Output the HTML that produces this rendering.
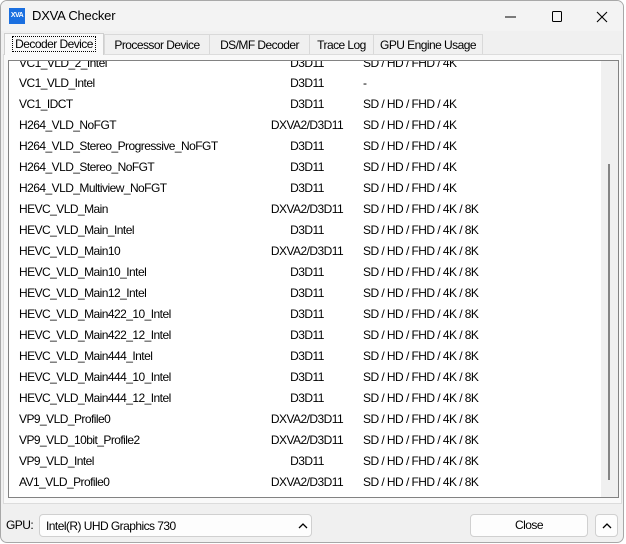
<!DOCTYPE html>
<html><head><meta charset="utf-8"><style>
*{margin:0;padding:0;box-sizing:border-box}
body{width:626px;height:544px;background:#fff;font-family:"Liberation Sans",sans-serif;font-size:12px;color:#000;position:relative;overflow:hidden;letter-spacing:-0.55px}
.win{position:absolute;left:0;top:0;width:624px;height:543px;background:#f0f0f0;border:1px solid #a8a8a8;border-radius:7px;overflow:hidden}
.title{position:absolute;left:0;top:0;width:100%;height:30px;background:#f3f3f3}
.abs{position:absolute}
.tab{position:absolute;top:33px;height:20px;border:1px solid #d9d9d9;border-bottom:none;background:#f0f0f0;padding:3px 0 0;text-align:center;white-space:nowrap;font-size:12px}
.panel{position:absolute;left:2px;top:53px;width:619px;height:450px;background:#f9f9f9;border:1px solid #dcdcdc}
.list{position:absolute;left:7px;top:59px;width:611px;height:438px;background:#fff;border:1px solid #828282;overflow:hidden}
.row{position:absolute;left:0;height:21px;width:592px;line-height:21px;white-space:nowrap}
.c1{position:absolute;left:10px}
.c2{position:absolute;left:240px;width:116px;text-align:center}
.c3{position:absolute;left:354px}
.btn{position:absolute;background:#fdfdfd;border:1px solid #d0d0d0;border-radius:4px}
</style></head><body>
<div class="win">
<div class="title"></div>
<div class="abs" style="left:8px;top:7px;width:16px;height:16px;background:#1a6fe0;color:#fff;font-size:7px;font-weight:bold;line-height:16px;text-align:center;letter-spacing:-0.5px">XVA</div>
<div class="abs" style="left:31px;top:7px;font-size:13px;letter-spacing:-0.2px">DXVA Checker</div>
<svg class="abs" style="left:500px;top:8px" width="120" height="16">
<line x1="4" y1="8" x2="15" y2="8" stroke="#000" stroke-width="1"/>
<rect x="51.5" y="2.5" width="9" height="10" rx="1" fill="none" stroke="#000"/>
<path d="M96 3L106 13M106 3L96 13" stroke="#000" stroke-width="1.1"/>
</svg>
<div class="panel"></div>
<div class="tab" style="left:103px;width:106px">Processor Device</div>
<div class="tab" style="left:208px;width:101px">DS/MF Decoder</div>
<div class="tab" style="left:308px;width:65px">Trace Log</div>
<div class="tab" style="left:372px;width:110px">GPU Engine Usage</div>
<div class="tab" style="left:3px;top:32px;width:100px;height:22px;background:#f9f9f9;border-color:#cfcfcf;z-index:2"><span style="border:1px dotted #000;padding:0 2px">Decoder Device</span></div>
<div class="list">
<div class="row" style="top:-8px"><span class="c1">VC1_VLD_2_Intel</span><span class="c2">D3D11</span><span class="c3">SD / HD / FHD / 4K</span></div>
<div class="row" style="top:12px"><span class="c1">VC1_VLD_Intel</span><span class="c2">D3D11</span><span class="c3">-</span></div>
<div class="row" style="top:33px"><span class="c1">VC1_IDCT</span><span class="c2">D3D11</span><span class="c3">SD / HD / FHD / 4K</span></div>
<div class="row" style="top:54px"><span class="c1">H264_VLD_NoFGT</span><span class="c2">DXVA2/D3D11</span><span class="c3">SD / HD / FHD / 4K</span></div>
<div class="row" style="top:75px"><span class="c1">H264_VLD_Stereo_Progressive_NoFGT</span><span class="c2">D3D11</span><span class="c3">SD / HD / FHD / 4K</span></div>
<div class="row" style="top:96px"><span class="c1">H264_VLD_Stereo_NoFGT</span><span class="c2">D3D11</span><span class="c3">SD / HD / FHD / 4K</span></div>
<div class="row" style="top:117px"><span class="c1">H264_VLD_Multiview_NoFGT</span><span class="c2">D3D11</span><span class="c3">SD / HD / FHD / 4K</span></div>
<div class="row" style="top:138px"><span class="c1">HEVC_VLD_Main</span><span class="c2">DXVA2/D3D11</span><span class="c3">SD / HD / FHD / 4K / 8K</span></div>
<div class="row" style="top:159px"><span class="c1">HEVC_VLD_Main_Intel</span><span class="c2">D3D11</span><span class="c3">SD / HD / FHD / 4K / 8K</span></div>
<div class="row" style="top:180px"><span class="c1">HEVC_VLD_Main10</span><span class="c2">DXVA2/D3D11</span><span class="c3">SD / HD / FHD / 4K / 8K</span></div>
<div class="row" style="top:201px"><span class="c1">HEVC_VLD_Main10_Intel</span><span class="c2">D3D11</span><span class="c3">SD / HD / FHD / 4K / 8K</span></div>
<div class="row" style="top:222px"><span class="c1">HEVC_VLD_Main12_Intel</span><span class="c2">D3D11</span><span class="c3">SD / HD / FHD / 4K / 8K</span></div>
<div class="row" style="top:243px"><span class="c1">HEVC_VLD_Main422_10_Intel</span><span class="c2">D3D11</span><span class="c3">SD / HD / FHD / 4K / 8K</span></div>
<div class="row" style="top:264px"><span class="c1">HEVC_VLD_Main422_12_Intel</span><span class="c2">D3D11</span><span class="c3">SD / HD / FHD / 4K / 8K</span></div>
<div class="row" style="top:285px"><span class="c1">HEVC_VLD_Main444_Intel</span><span class="c2">D3D11</span><span class="c3">SD / HD / FHD / 4K / 8K</span></div>
<div class="row" style="top:306px"><span class="c1">HEVC_VLD_Main444_10_Intel</span><span class="c2">D3D11</span><span class="c3">SD / HD / FHD / 4K / 8K</span></div>
<div class="row" style="top:327px"><span class="c1">HEVC_VLD_Main444_12_Intel</span><span class="c2">D3D11</span><span class="c3">SD / HD / FHD / 4K / 8K</span></div>
<div class="row" style="top:348px"><span class="c1">VP9_VLD_Profile0</span><span class="c2">DXVA2/D3D11</span><span class="c3">SD / HD / FHD / 4K / 8K</span></div>
<div class="row" style="top:369px"><span class="c1">VP9_VLD_10bit_Profile2</span><span class="c2">DXVA2/D3D11</span><span class="c3">SD / HD / FHD / 4K / 8K</span></div>
<div class="row" style="top:390px"><span class="c1">VP9_VLD_Intel</span><span class="c2">D3D11</span><span class="c3">SD / HD / FHD / 4K / 8K</span></div>
<div class="row" style="top:411px"><span class="c1">AV1_VLD_Profile0</span><span class="c2">DXVA2/D3D11</span><span class="c3">SD / HD / FHD / 4K / 8K</span></div>
<div class="abs" style="left:592px;top:0;width:17px;height:436px;background:#f0f0f0"></div>
<div class="abs" style="left:599px;top:103px;width:2px;height:316px;background:#858585"></div>
</div>
<div class="abs" style="left:5px;top:517px">GPU:</div>
<div class="btn" style="left:38px;top:513px;width:273px;height:23px"><span class="abs" style="left:6px;top:4px">Intel(R) UHD Graphics 730</span>
<svg class="abs" style="left:258px;top:7px" width="10" height="8"><path d="M1 6L5 2L9 6" fill="none" stroke="#000" stroke-width="1.3"/></svg></div>
<div class="btn" style="left:469px;top:513px;width:118px;height:23px;text-align:center;line-height:21px">Close</div>
<div class="btn" style="left:594px;top:513px;width:23px;height:23px"><svg class="abs" style="left:6px;top:7px" width="10" height="8"><path d="M1 6L5 2L9 6" fill="none" stroke="#000" stroke-width="1.3"/></svg></div>
</div>
</body></html>
